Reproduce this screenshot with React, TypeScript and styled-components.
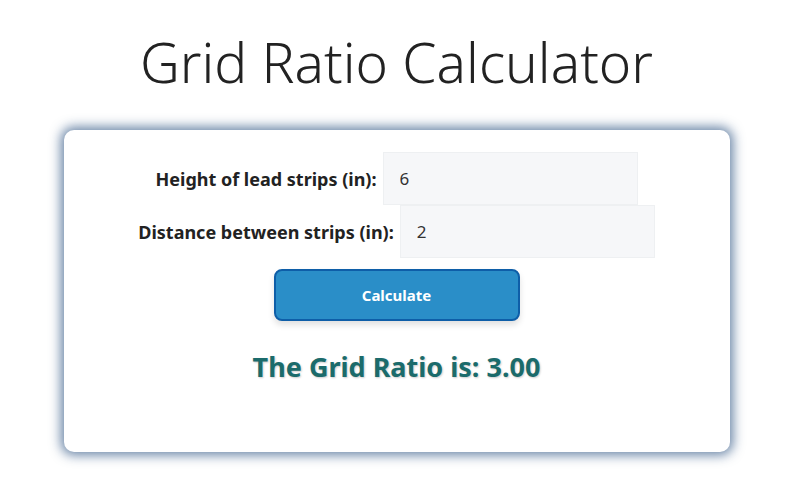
import React, { useState } from "react";
import styled, { createGlobalStyle } from "styled-components";

const GlobalStyle = createGlobalStyle`
  body {
    margin: 0;
    background: #ffffff;
    font-family: "Noto Sans", "Open Sans", sans-serif;
    color: #222;
  }
`;

const App: React.FC = () => {
  // input values for the two measurements
  const [height, setHeight] = useState<string>("6");
  const [distance, setDistance] = useState<string>("2");
  const [ratio, setRatio] = useState<string>("3.00");

  const handleCalculate = () => {
    const h = parseFloat(height);
    const d = parseFloat(distance);
    if (!isNaN(h) && !isNaN(d) && d !== 0) setRatio((h / d).toFixed(2));
  };

  return (
    <>
      <GlobalStyle />
      <Page>
        <Title>Grid Ratio Calculator</Title>
        <Card>
          <Row>
            <Label>Height of lead strips (in):</Label>
            <Input value={height} onChange={(e) => setHeight(e.target.value)} />
          </Row>
          <Row>
            <Label>Distance between strips (in):</Label>
            <Input value={distance} onChange={(e) => setDistance(e.target.value)} />
          </Row>
          <CalcButton onClick={handleCalculate}>Calculate</CalcButton>
          <Result>The Grid Ratio is: {ratio}</Result>
        </Card>
      </Page>
    </>
  );
};

export default App;

// Styled Components
const Page = styled.div`
  display: flex;
  flex-direction: column;
  align-items: center;
  padding: 22px 0 38px;
  min-height: 490px;
  box-sizing: border-box;
`;

const Title = styled.h1`
  margin: 0 0 28px;
  font-size: 55px;
  font-weight: 300;
  line-height: 80px;
  color: #222;
`;

const Card = styled.div`
  width: 666px;
  box-sizing: border-box;
  padding: 22px 0 67px;
  background: #fff;
  border-radius: 10px;
  box-shadow: 0 0 12px 3px rgba(75, 108, 148, 0.85);
  display: flex;
  flex-direction: column;
  align-items: center;
`;

const Row = styled.div`
  display: flex;
  align-items: center;
  justify-content: center;
  gap: 6px;
`;

const Label = styled.label`
  font-size: 18px;
  font-weight: 700;
  color: #222;
`;

const Input = styled.input`
  width: 255px;
  height: 53px;
  box-sizing: border-box;
  padding: 0 16px;
  border: 1px solid #eef0f2;
  background: #f6f7f9;
  font-family: inherit;
  font-size: 17px;
  color: #333;
  outline: none;
`;

const CalcButton = styled.button`
  margin-top: 11px;
  width: 246px;
  height: 52px;
  background: #2a8ec8;
  color: #fff;
  border: 2px solid #0e5ea8;
  border-radius: 8px;
  font-family: inherit;
  font-size: 15px;
  font-weight: 700;
  box-shadow: 0 4px 6px rgba(0, 0, 0, 0.12);
  cursor: pointer;
`;

const Result = styled.div`
  margin-top: 27px;
  font-size: 27px;
  font-weight: 700;
  color: #1b6b6b;
  text-shadow: 1px 1px 2px rgba(0, 0, 0, 0.2);
`;
